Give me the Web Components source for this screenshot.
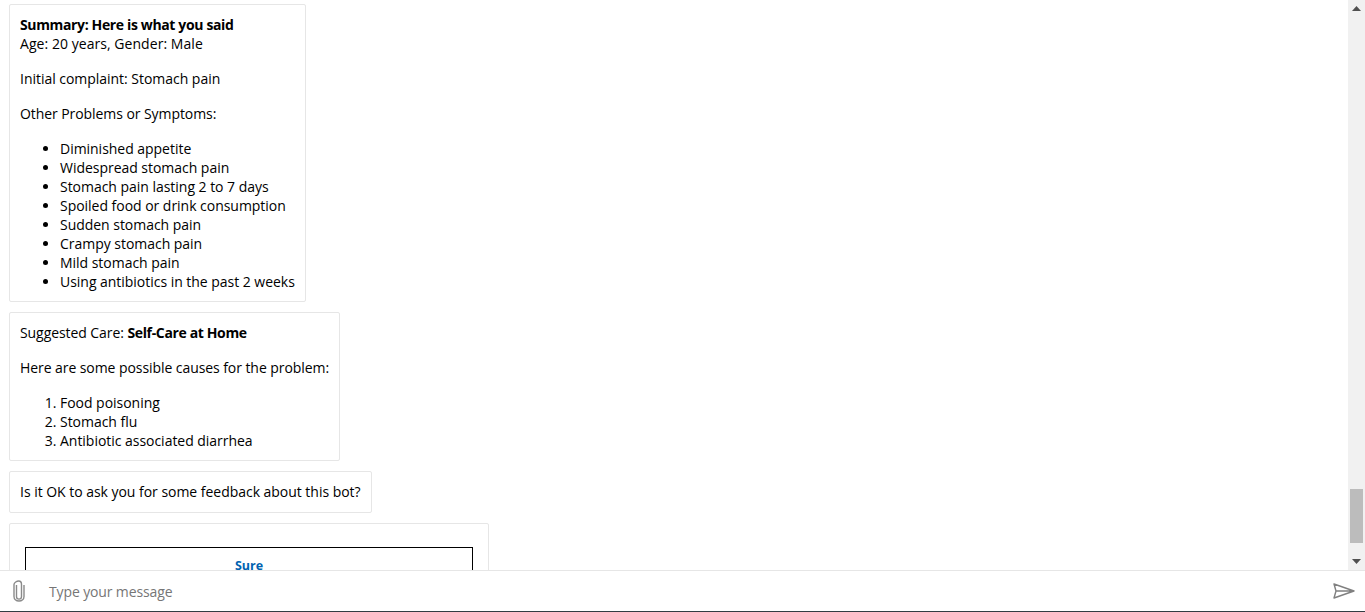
<!DOCTYPE html>
<html lang="en">
<head>
<meta charset="utf-8">
<title>Chat</title>
<style>
  html, body { margin: 0; height: 100%; overflow: hidden; background: #fff; }
  body { font: 14px/19px "Open Sans", sans-serif; color: #000; letter-spacing: -0.03px; }
  b { letter-spacing: -0.36px; }
  p { margin: 0 0 16px; }
  p:last-child { margin-bottom: 0; }
  ul, ol { margin: 16px 0 0; padding-left: 40px; }
  .wider { letter-spacing: 0.05px; }
  .tight { letter-spacing: -0.07px; }
</style>
</head>
<body>
<chat-app>
  <chat-card>
    <b>Summary: Here is what you said</b><br>
    <span class="wider">Age: 20 years, Gender: Male</span>
    <p></p>
    <p>Initial complaint: Stomach pain</p>
    <p class="tight">Other Problems or Symptoms:</p>
    <ul>
      <li>Diminished appetite</li>
      <li>Widespread stomach pain</li>
      <li>Stomach pain lasting 2 to 7 days</li>
      <li>Spoiled food or drink consumption</li>
      <li>Sudden stomach pain</li>
      <li>Crampy stomach pain</li>
      <li>Mild stomach pain</li>
      <li>Using antibiotics in the past 2 weeks</li>
    </ul>
  </chat-card>
  <chat-card>
    <p><span class="tight">Suggested Care: </span><b>Self-Care at Home</b></p>
    <p class="tight">Here are some possible causes for the problem:</p>
    <ol>
      <li>Food poisoning</li>
      <li>Stomach flu</li>
      <li>Antibiotic associated diarrhea</li>
    </ol>
  </chat-card>
  <chat-card tall>Is it OK to ask you for some feedback about this bot?</chat-card>
  <chat-card wide>
    <chat-button>Sure</chat-button>
  </chat-card>
</chat-app>

<script>
const appTemplate = document.createElement('template');
appTemplate.innerHTML = `
  <style>
    :host { display: flex; flex-direction: column; height: 612px; }
    .main { flex: 1; min-height: 0; display: flex; }
    .log {
      flex: 1;
      min-width: 0;
      overflow: hidden;
      padding: 4px 0 0 9px;
      display: flex;
      flex-direction: column;
      align-items: flex-start;
      gap: 10px;
    }
  </style>
  <div class="main">
    <div class="log"><slot></slot></div>
    <chat-scrollbar></chat-scrollbar>
  </div>
  <chat-composer></chat-composer>
`;

class ChatApp extends HTMLElement {
  constructor() {
    super();
    this.attachShadow({ mode: 'open' });
    this.shadowRoot.appendChild(appTemplate.content.cloneNode(true));
  }
}

const cardTemplate = document.createElement('template');
cardTemplate.innerHTML = `
  <style>
    :host {
      display: block;
      flex: none;
      box-sizing: border-box;
      padding: 10px;
      background: #fff;
      border: 1px solid #e6e6e6;
      border-radius: 2px;
    }
    :host([tall]) { padding-bottom: 11px; }
    :host([wide]) { width: 480px; padding: 23px 15px 15px; }
  </style>
  <slot></slot>
`;

class ChatCard extends HTMLElement {
  constructor() {
    super();
    this.attachShadow({ mode: 'open' });
    this.shadowRoot.appendChild(cardTemplate.content.cloneNode(true));
  }
}

const buttonTemplate = document.createElement('template');
buttonTemplate.innerHTML = `
  <style>
    :host {
      display: block;
      height: 44px;
      box-sizing: border-box;
      border: 1px solid #000;
      padding-top: 8px;
      text-align: center;
      color: #0063b1;
      font-weight: 700;
      font-size: 12.5px;
      letter-spacing: 0;
    }
  </style>
  <slot></slot>
`;

class ChatButton extends HTMLElement {
  constructor() {
    super();
    this.attachShadow({ mode: 'open' });
    this.shadowRoot.appendChild(buttonTemplate.content.cloneNode(true));
  }
}

const scrollbarTemplate = document.createElement('template');
scrollbarTemplate.innerHTML = `
  <style>
    :host {
      display: flex;
      flex-direction: column;
      flex: none;
      width: 17px;
      background: #f1f1f1;
    }
    .arrow { height: 17px; display: flex; align-items: center; justify-content: center; flex: none; }
    .track { flex: 1; padding: 472px 2px 0; }
    .thumb { height: 54px; background: #bcbcbc; }
  </style>
  <div class="arrow"><svg width="9" height="5" viewBox="0 0 9 5"><path d="M4.5 0 9 5H0z" fill="#505050"/></svg></div>
  <div class="track"><div class="thumb"></div></div>
  <div class="arrow"><svg width="9" height="5" viewBox="0 0 9 5"><path d="M0 0h9L4.5 5z" fill="#505050"/></svg></div>
`;

class ChatScrollbar extends HTMLElement {
  constructor() {
    super();
    this.attachShadow({ mode: 'open' });
    this.shadowRoot.appendChild(scrollbarTemplate.content.cloneNode(true));
  }
}

const composerTemplate = document.createElement('template');
composerTemplate.innerHTML = `
  <style>
    :host {
      display: flex;
      align-items: center;
      flex: none;
      box-sizing: border-box;
      height: 42px;
      background: #fff;
      border-top: 1px solid #e6e6e6;
      border-bottom: 1px solid #333c42;
    }
    .attach { width: 49px; flex: none; display: flex; padding-left: 13px; box-sizing: border-box; }
    .hint { flex: 1; color: #767676; padding-top: 1px; letter-spacing: -0.13px; }
    .send { width: 22px; margin-right: 10px; display: flex; }
  </style>
  <div class="attach">
    <svg width="12" height="22" viewBox="0 0 12 22" fill="none" stroke="#8a8a8a" stroke-width="1.4">
      <path d="M3.500 5v11.500c0 1.600 1 2.600 2.500 2.600s2.500-1 2.500-2.600V4.500C8.500 2.500 7.500 1 5.700 1S1 2.500 1 4.500v12C1 19 3 21 6 21s5-2 5-4.500V5"/>
    </svg>
  </div>
  <span class="hint">Type your message</span>
  <div class="send">
    <svg width="22" height="16" viewBox="0 0 22 16" fill="none" stroke="#808080" stroke-width="1.4" stroke-linejoin="round">
      <path d="M1 1 21 8 1 15 3 8zM3 8h18"/>
    </svg>
  </div>
`;

class ChatComposer extends HTMLElement {
  constructor() {
    super();
    this.attachShadow({ mode: 'open' });
    this.shadowRoot.appendChild(composerTemplate.content.cloneNode(true));
  }
}

customElements.define('chat-app', ChatApp);
customElements.define('chat-card', ChatCard);
customElements.define('chat-button', ChatButton);
customElements.define('chat-scrollbar', ChatScrollbar);
customElements.define('chat-composer', ChatComposer);
</script>
</body>
</html>
